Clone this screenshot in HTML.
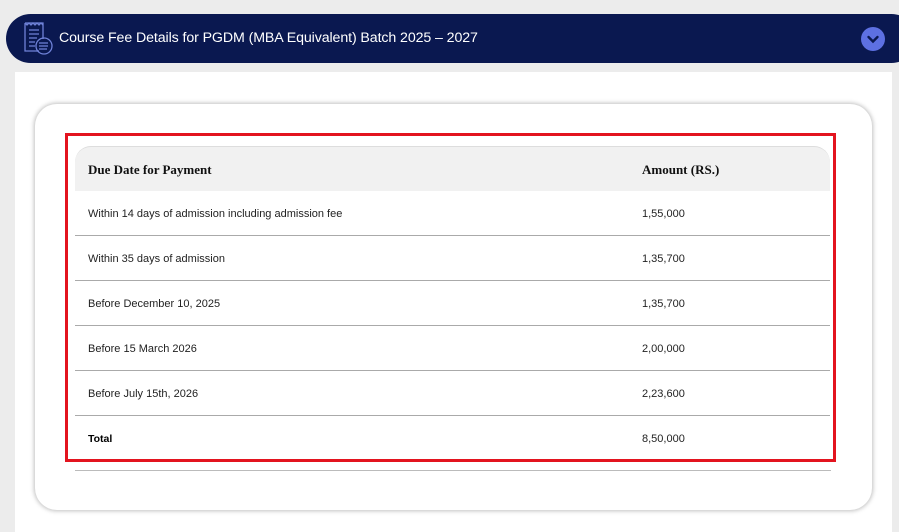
<!DOCTYPE html>
<html><head><style>
*{margin:0;padding:0;box-sizing:border-box}
body{width:899px;height:513px;background:#ececec;position:relative;overflow:hidden;font-family:"Liberation Sans",sans-serif}
.bar{position:absolute;left:6px;top:14px;width:910px;height:49px;background:#0a1850;border-radius:25px}
.bar .t{position:absolute;left:53px;top:16px;color:#fff;font-size:14.2px;letter-spacing:-0.1px}
.circ{position:absolute;left:855px;top:13px;width:24px;height:24px;border-radius:50%;background:#5d70e2}
.panel{position:absolute;left:15px;top:72px;width:877px;height:460px;background:#fff}
.card{position:absolute;left:35px;top:104px;width:837px;height:406px;background:#fff;border-radius:22px;box-shadow:0 0 4px 1px rgba(0,0,0,.25)}
.red{position:absolute;left:65px;top:133px;width:771px;height:329px;border:3px solid #e3141f}
.row{position:absolute;left:75px;width:755px;height:45px;border-bottom:1px solid #aaa;font-size:11px;color:#222}
.row span{position:absolute;top:17px}
.row .a{left:13px}.row .b{left:567px}
.hd{background:#f1f1f1;border-radius:16px 16px 0 0;border:none;border-top:1px solid #ddd;font-family:"Liberation Serif",serif;font-weight:bold;font-size:13px;color:#111}
.hd span{top:15px}
</style></head><body>
<div class="bar">
<svg style="position:absolute;left:16px;top:7px" width="32" height="34" viewBox="0 0 32 34" fill="none" stroke="#6f82d8" stroke-width="1.3">
<path d="M3 2h18v16M3 2v28h14"/><path d="M3 2l2 2 2-2 2 2 2-2 2 2 2-2 2 2 2-2 2 2"/>
<path d="M7 9h10M7 13h10M7 17h8M7 21h6M7 25h6"/>
<circle cx="22" cy="25" r="8"/><path d="M17 22h9M17 25h9M17 28h8"/></svg>
<div class="t">Course Fee Details for PGDM (MBA Equivalent) Batch 2025 – 2027</div>
<div class="circ"><svg width="24" height="24" viewBox="0 0 24 24"><path d="M7.5 10l4.5 4.5 4.5-4.5" stroke="#0a1850" stroke-width="2.4" fill="none" stroke-linecap="round"/></svg></div>
</div>
<div class="panel"></div>
<div class="card"></div>
<div class="row hd" style="top:146px"><span class="a">Due Date for Payment</span><span class="b">Amount (RS.)</span></div>
<div class="row" style="top:191px"><span class="a">Within 14 days of admission including admission fee</span><span class="b">1,55,000</span></div>
<div class="row" style="top:236px"><span class="a">Within 35 days of admission</span><span class="b">1,35,700</span></div>
<div class="row" style="top:281px"><span class="a">Before December 10, 2025</span><span class="b">1,35,700</span></div>
<div class="row" style="top:326px"><span class="a">Before 15 March 2026</span><span class="b">2,00,000</span></div>
<div class="row" style="top:371px"><span class="a">Before July 15th, 2026</span><span class="b">2,23,600</span></div>
<div class="row" style="top:416px;border:none"><span class="a" style="font-weight:bold;font-size:10.5px;color:#000">Total</span><span class="b">8,50,000</span></div>
<div style="position:absolute;left:75px;top:470px;width:756px;height:1px;background:#bbb"></div>
<div class="red"></div>
</body></html>
